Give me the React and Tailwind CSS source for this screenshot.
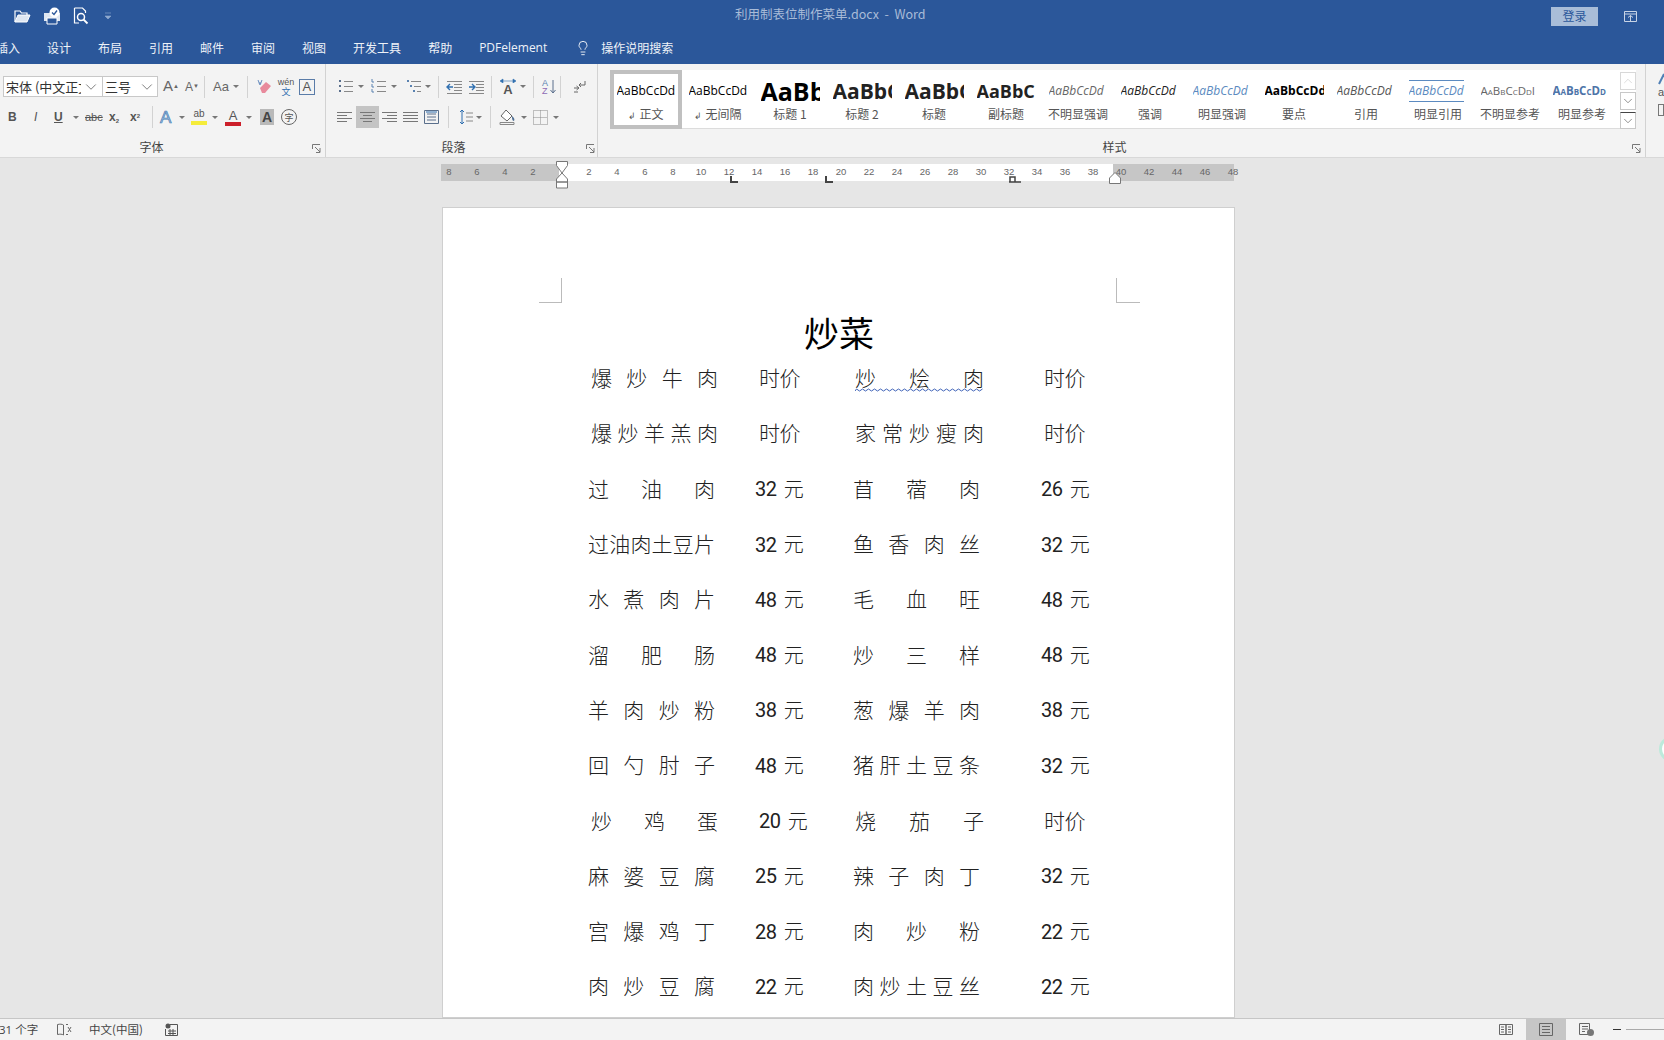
import { ChevronDown, ChevronUp, Lightbulb } from 'lucide-react';

const menu = [
  { a: '爆炒牛肉', p: '时价', b: '炒烩肉', q: '时价', off: true, wavy: true },
  { a: '爆炒羊羔肉', p: '时价', b: '家常炒瘦肉', q: '时价', off: true },
  { a: '过油肉', p: '32 元', b: '苜蓿肉', q: '26 元' },
  { a: '过油肉土豆片', p: '32 元', b: '鱼香肉丝', q: '32 元' },
  { a: '水煮肉片', p: '48 元', b: '毛血旺', q: '48 元' },
  { a: '溜肥肠', p: '48 元', b: '炒三样', q: '48 元' },
  { a: '羊肉炒粉', p: '38 元', b: '葱爆羊肉', q: '38 元' },
  { a: '回勺肘子', p: '48 元', b: '猪肝土豆条', q: '32 元' },
  { a: '炒鸡蛋', p: '20 元', b: '烧茄子', q: '时价', off: true },
  { a: '麻婆豆腐', p: '25 元', b: '辣子肉丁', q: '32 元' },
  { a: '宫爆鸡丁', p: '28 元', b: '肉炒粉', q: '22 元' },
  { a: '肉炒豆腐', p: '22 元', b: '肉炒土豆丝', q: '22 元' },
];

const styles = [
  { label: '正文', mark: true, cls: 'text-[12px] text-black' },
  { label: '无间隔', mark: true, cls: 'text-[12px] text-black' },
  { label: '标题 1', text: 'AaBb', cls: "text-[25px] font-bold text-black" },
  { label: '标题 2', text: 'AaBbC', cls: "text-[21px] font-bold text-[#222] font-['Liberation_Serif',serif]" },
  { label: '标题', text: 'AaBbC', cls: "text-[21px] font-bold text-[#222] font-['Liberation_Serif',serif]" },
  { label: '副标题', text: 'AaBbC', cls: 'text-[18px] font-bold text-[#222]' },
  { label: '不明显强调', cls: 'text-[12px] italic text-[#666]' },
  { label: '强调', cls: 'text-[12px] italic text-[#222]' },
  { label: '明显强调', cls: 'text-[12px] italic text-[#5b8ac0]' },
  { label: '要点', cls: 'text-[12px] font-bold text-black' },
  { label: '引用', cls: 'text-[12px] italic text-[#555]' },
  { label: '明显引用', ruled: true, cls: 'text-[12px] italic text-[#5b8ac0]' },
  { label: '不明显参考', text: 'AaBbCcDdI', cls: 'text-[11.5px] text-[#666] [font-variant:small-caps]' },
  { label: '明显参考', text: 'AaBbCcDd', cls: 'text-[11.5px] font-bold text-[#4e74a8] [font-variant:small-caps]' },
];

function Ico({ w = 16, h = 16, className = '', children }) {
  return (
    <svg width={w} height={h} viewBox={`0 0 ${w} ${h}`} fill="none" className={`shrink-0 ${className}`}>
      {children}
    </svg>
  );
}

function Caret({ className = '' }) {
  return (
    <Ico w={6} h={3} className={className}>
      <path d="M0 0h6L3 3z" fill="#777" />
    </Ico>
  );
}

function Sep({ className = '' }) {
  return <div className={`w-px h-[22px] bg-[#d2d2d2] shrink-0 ${className}`} />;
}

function Lines({ rows, className = '' }) {
  return (
    <Ico w={15} h={14} className={className}>
      {rows.map(([x1, x2], i) => (
        <path key={i} d={`M${x1} ${2.5 + i * 3}H${x2}`} stroke="#777" />
      ))}
    </Ico>
  );
}

function Launcher({ className = '' }) {
  return (
    <Ico w={9} h={9} className={`absolute bottom-[4px] ${className}`}>
      <path d="M.5 5V.5H8M3 3l5 5M8 4v4.500H4" stroke="#777" />
    </Ico>
  );
}

function ListIcon({ kind, className = '' }) {
  return (
    <Ico w={15} h={15} className={className}>
      {[2, 7, 12].map((y, i) => (
        <g key={y}>
          {kind === 'bullet' && <rect x="1" y={y - 1} width="2" height="2" fill="#5a6f8c" />}
          {kind === 'num' && <path d={`M1 ${y - 2}v3h2`} stroke="#5a82b0" />}
          {kind === 'multi' && <rect x={1 + i * 3} y={y - 1} width="2" height="2" fill="#5a82b0" />}
          <path d={`M${kind === 'multi' ? 5 + i * 3 : 6} ${y + 0.5}H15`} stroke="#888" />
        </g>
      ))}
    </Ico>
  );
}

function Indent({ flip, className = '' }) {
  return (
    <Ico w={16} h={14} className={className}>
      {[1, 4, 7, 10, 13].map((y) => (
        <path key={y} d={`M${y === 1 || y === 13 ? 1 : 8} ${y + 0.500}H16`} stroke="#888" />
      ))}
      <path d={flip ? 'M1 7h5M4 4l3 3-3 3' : 'M7 7H2M4 4L1 7l3 3'} stroke="#2f6fb0" strokeWidth="1.4" />
    </Ico>
  );
}

function Ruler() {
  const nums = [8, 6, 4, 2, '', 2, 4, 6, 8, 10, 12, 14, 16, 18, 20, 22, 24, 26, 28, 30, 32, 34, 36, 38, 40, 42, 44, 46, 48];
  return (
    <div className="relative flex h-[17px] w-[793px] ml-[441px] mt-[6px] shrink-0">
      <div className="w-[118px] bg-[#c6c6c6]" />
      <div className="w-[554px] bg-white" />
      <div className="w-[121px] bg-[#c6c6c6]" />
      <div className="absolute inset-0 -left-[6px] flex items-center">
        {nums.map((n, i) => (
          <span key={i} className="w-[28px] shrink-0 text-center text-[9.5px] text-[#666] font-['Liberation_Sans',sans-serif]">{n}</span>
        ))}
      </div>
      <Ico w={14} h={28} className="absolute left-[114px] -top-[3px]">
        <path d="M1.500.500h11v4L7 12l-5.500-7.500z M7 12l5.500 6v3h-11v-3z M1.500 21h11v6h-11z" fill="#fff" stroke="#777" />
      </Ico>
      <Ico w={14} h={12} className="absolute left-[667px] top-[8px]">
        <path d="M7 .500L12.500 6v5.500h-11V6z" fill="#fff" stroke="#777" />
      </Ico>
      <Ico w={8} h={8} className="absolute left-[289px] top-[12px]">
        <path d="M1 0v6h7" stroke="#444" strokeWidth="2" />
      </Ico>
      <Ico w={8} h={8} className="absolute left-[384px] top-[12px]">
        <path d="M1 0v6h7" stroke="#444" strokeWidth="2" />
      </Ico>
      <Ico w={12} h={8} className="absolute left-[568px] top-[12px]">
        <path d="M1 6V1h5v5M0 6h12" stroke="#444" strokeWidth="1.500" />
      </Ico>
    </div>
  );
}

function Spread({ text, className = '' }) {
  return (
    <div className={`flex justify-between ${className}`}>
      {text.split('').map((c, i) => <span key={i}>{c}</span>)}
    </div>
  );
}

function Price({ text }) {
  const [num, unit] = text.split(' ');
  if (!unit) return <span className="tracking-[-0.5px]">{text}</span>;
  return (
    <span className="flex items-center">
      <span className="font-['Roboto',sans-serif] font-normal text-[#222] text-[20px] tracking-[-0.4px] mr-[7px] mt-[2px]">{num}</span>
      <span className="text-[20px] mt-[1px]">{unit}</span>
    </span>
  );
}

function MenuRow({ row }) {
  const grid = row.off
    ? 'grid-cols-[168px_96px_189px_auto] pl-[148px]'
    : 'grid-cols-[167px_98px_188px_auto] pl-[145px]';
  return (
    <div className={`grid ${grid} h-[55.3px] items-center text-[21px] leading-none font-light text-[#222]`}>
      <Spread text={row.a} className="w-[127px]" />
      <Price text={row.p} />
      <div className={`relative ${row.off ? 'w-[129px]' : 'w-[127px]'}`}>
        <Spread text={row.b} />
        {row.wavy && (
          <Ico w={129} h={4} className="absolute left-0 -bottom-[4px]">
            <path
              d={`M0 3${Array.from({ length: 43 }, (_, i) => `L${i * 3 + 1.5} ${i % 2 ? 3 : 1}`).join('')}`}
              stroke="#3f63b8"
            />
          </Ico>
        )}
      </div>
      <Price text={row.q} />
    </div>
  );
}

function TitleBar() {
  return (
    <div className="relative flex items-center h-[32px] shrink-0 text-[#a9bcd8]">
      <Ico w={18} h={16} className="ml-[14px]">
        <path d="M1 14V3h5l1.500 2H13v2" stroke="#fff" strokeWidth="1.200" />
        <path d="M1 14l3-7h12l-3 7z" fill="#dfe7f2" stroke="#fff" />
      </Ico>
      <Ico w={18} h={18} className="ml-[11px]">
        <path d="M1 6h16v8H1z" fill="#dfe7f2" />
        <path d="M4 11h10v6H4z" fill="#2b579a" stroke="#fff" />
        <circle cx="11.500" cy="5.500" r="5" fill="#fff" />
        <path d="M9 5.500l2 2 3-4" stroke="#2b579a" strokeWidth="1.300" />
      </Ico>
      <Ico w={16} h={18} className="ml-[12px]">
        <path d="M1.500 1h8l3 3v2M1.500 1v15H6" stroke="#fff" strokeWidth="1.200" />
        <circle cx="8" cy="10" r="3.500" stroke="#fff" strokeWidth="1.500" />
        <path d="M10.500 12.500l4 4" stroke="#fff" strokeWidth="1.800" />
      </Ico>
      <Ico w={8} h={8} className="ml-[15px]">
        <path d="M1 1h6M1 4h6L4 7z" stroke="#8fa9cf" fill="#8fa9cf" strokeWidth=".6" />
      </Ico>
      <div className="absolute left-[735px] top-[5px] text-[12.5px] leading-[18px] whitespace-pre">利用制表位制作菜单.docx  -  Word</div>
      <div className="ml-auto flex items-center">
        <div className="flex items-center justify-center w-[47px] h-[19px] bg-[#a9bdd8] text-[#2b579a] text-[12px]">登录</div>
        <Ico w={13} h={11} className="ml-[26px] mr-[27px]">
          <path d="M.500.500h12v10H.500zM.500 3h12M4 6.500l2.500-2 2.500 2M6.500 4.500V10" stroke="#c8d4e6" />
        </Ico>
      </div>
    </div>
  );
}

function TabRow() {
  const tabs = ['插入', '设计', '布局', '引用', '邮件', '审阅', '视图', '开发工具', '帮助'];
  return (
    <div className="flex items-center h-[32px] shrink-0 text-[12px] text-[#eef2f8] pl-0">
      <div className="flex gap-[27px] -ml-[4px]">
        {tabs.map((t) => <span key={t}>{t}</span>)}
        <span className="font-['Open_Sans',sans-serif] text-[12px]">PDFelement</span>
      </div>
      <Lightbulb size={16} strokeWidth={1.3} className="ml-[28px] text-white" />
      <span className="ml-[10px]">操作说明搜索</span>
    </div>
  );
}

function FontGroup() {
  return (
    <div className="relative w-[326px] border-r border-[#d2d2d2] shrink-0 pt-[12px]">
      <div className="flex items-center h-[21px] pl-[3px]">
        <div className="flex items-center w-[100px] h-[21px] bg-white border border-[#c8c8c8] pl-[2px] text-[13px] text-[#333]">
          <span className="w-[75px] overflow-hidden whitespace-nowrap">宋体 (中文正文)</span>
          <ChevronDown size={18} strokeWidth={1} className="text-[#555] ml-[1px]" />
        </div>
        <div className="flex items-center w-[55px] h-[21px] bg-white border border-l-0 border-[#c8c8c8] pl-[2px] text-[13px] text-[#333]">
          <span className="w-[33px]">三号</span>
          <ChevronDown size={18} strokeWidth={1} className="text-[#555]" />
        </div>
        <span className="ml-[5px] text-[15px] text-[#666] font-['Liberation_Sans',sans-serif] w-[14px]">A<sup className="text-[6px]">▲</sup></span>
        <span className="ml-[8px] text-[12px] text-[#666] font-['Liberation_Sans',sans-serif] w-[12px]">A<sup className="text-[6px]">▼</sup></span>
        <Sep className="ml-[7px]" />
        <span className="ml-[8px] text-[13px] text-[#666] font-['Liberation_Sans',sans-serif]">Aa</span>
        <Caret className="ml-[4px]" />
        <Sep className="ml-[8px]" />
        <Ico w={16} h={16} className="ml-[9px]">
          <path d="M3 9l6-6 5 4-6 7H5z" fill="#e88a9c" />
          <path d="M1 1l2 5 2-5M1.700 4h2.600" stroke="#6b8fc0" />
        </Ico>
        <div className="ml-[5px] w-[16px] flex flex-col items-center leading-none">
          <span className="text-[9px] text-[#555] font-['Liberation_Sans',sans-serif]">wén</span>
          <span className="text-[9px] text-[#2f6fb0]">文</span>
        </div>
        <div className="ml-[5px] flex items-center justify-center w-[16px] h-[16px] border border-[#5a7ca8] text-[13px] leading-none text-[#555] font-['Liberation_Sans',sans-serif]">A</div>
      </div>
      <div className="flex items-center h-[22px] mt-[9px] text-[#555] font-['Liberation_Sans',sans-serif]">
        <span className="ml-[8px] w-[10px] text-[12px] font-bold">B</span>
        <span className="ml-[16px] w-[8px] text-[12px] italic">I</span>
        <span className="ml-[12px] w-[10px] text-[12px] font-bold underline">U</span>
        <Caret className="ml-[9px]" />
        <span className="ml-[6px] w-[18px] text-[11px] line-through">abc</span>
        <span className="ml-[6px] w-[12px] text-[12px] font-bold">x<sub className="text-[6px]">2</sub></span>
        <span className="ml-[9px] w-[13px] text-[12px] font-bold">x<sup className="text-[6px]">2</sup></span>
        <Sep className="ml-[9px]" />
        <span className="ml-[7px] w-[16px] text-[17px] leading-none text-[#a9cbe8] [-webkit-text-stroke:0.7px_#4f81b5]">A</span>
        <Caret className="ml-[3px]" />
        <div className="ml-[6px] w-[16px] flex flex-col items-center leading-none">
          <span className="text-[10px] h-[12px]">ab</span>
          <div className="w-[16px] h-[4px] bg-[#f5ec3a]" />
        </div>
        <Caret className="ml-[5px]" />
        <div className="ml-[7px] w-[16px] flex flex-col items-center leading-none">
          <span className="text-[13px] h-[13px]">A</span>
          <div className="w-[16px] h-[4px] bg-[#cc1f2a]" />
        </div>
        <Caret className="ml-[5px]" />
        <div className="ml-[8px] flex items-center justify-center w-[14px] h-[16px] bg-[#b9b9b9] text-[14px] font-bold leading-none text-[#444]">A</div>
        <div className="ml-[7px] flex items-center justify-center w-[16px] h-[16px] rounded-full border border-[#666] text-[9px] leading-none font-['Noto_Sans_CJK_SC',sans-serif]">字</div>
      </div>
      <div className="h-[20px] mt-[9px] text-center text-[12px] leading-[20px] text-[#444] pr-[22px]">字体</div>
      <Launcher className="right-[4px]" />
    </div>
  );
}

function ParaGroup() {
  const L = [[0, 15], [0, 10], [0, 15], [0, 10]];
  const C = [[0, 15], [3, 12], [0, 15], [3, 12]];
  const R = [[0, 15], [5, 15], [0, 15], [5, 15]];
  const J = [[0, 15], [0, 15], [0, 15], [0, 15]];
  return (
    <div className="relative w-[272px] border-r border-[#d2d2d2] shrink-0 pt-[12px]">
      <div className="flex items-center h-[21px]">
        <ListIcon kind="bullet" className="ml-[12px]" />
        <Caret className="ml-[5px]" />
        <ListIcon kind="num" className="ml-[7px]" />
        <Caret className="ml-[5px]" />
        <ListIcon kind="multi" className="ml-[9px]" />
        <Caret className="ml-[4px]" />
        <Sep className="ml-[7px]" />
        <Indent className="ml-[7px]" />
        <Indent flip className="ml-[6px]" />
        <Sep className="ml-[7px]" />
        <div className="ml-[7px] w-[18px] flex flex-col items-center leading-none">
          <Ico w={18} h={5}>
            <path d="M1 3l3-2v4zM17 3l-3-2v4z M4 3h10" fill="#2f6fb0" stroke="#2f6fb0" strokeWidth=".6" />
          </Ico>
          <span className="text-[13px] h-[13px] text-[#555] font-bold font-['Liberation_Sans',sans-serif]">A</span>
        </div>
        <Caret className="ml-[3px]" />
        <Sep className="ml-[7px]" />
        <div className="ml-[8px] w-[8px] flex flex-col leading-[8px] text-[9px] font-['Liberation_Sans',sans-serif]">
          <span className="text-[#5a82b0]">A</span>
          <span className="text-[#8e6bb5]">Z</span>
        </div>
        <Ico w={6} h={16}>
          <path d="M3 1v13M.500 11L3 14l2.500-3" stroke="#5a6f8c" />
        </Ico>
        <Sep className="ml-[4px]" />
        <Ico w={12} h={14} className="ml-[13px]">
          <path d="M11 1v4H5M7 3L5 5l2 2M0 8h4M2.500 6L5 8l-2.500 2M0 12h4" stroke="#666" />
        </Ico>
      </div>
      <div className="flex items-center h-[22px] mt-[9px]">
        <Lines rows={L} className="ml-[11px]" />
        <div className="ml-[4px] flex items-center justify-center w-[23px] h-[22px] bg-[#c4c4c4]">
          <Lines rows={C} />
        </div>
        <Lines rows={R} className="ml-[3px]" />
        <Lines rows={J} className="ml-[6px]" />
        <Ico w={15} h={16} className="ml-[6px]">
          <path d="M.500 1.500h14v13H.500zM3 5h9M3 8h9M3 11h9" stroke="#5a6f8c" />
          <path d="M2 3h11" stroke="#2f6fb0" />
        </Ico>
        <Sep className="ml-[9px]" />
        <Ico w={14} h={16} className="ml-[10px]">
          <path d="M3 1v14M1 3l2-2 2 2M1 13l2 2 2-2" stroke="#2f6fb0" />
          <path d="M7 4h7M7 8h7M7 12h7" stroke="#888" />
        </Ico>
        <Caret className="ml-[3px]" />
        <Sep className="ml-[8px]" />
        <Ico w={17} h={16} className="ml-[8px]">
          <path d="M7 1l6 6-5 5-6-5z" stroke="#666" fill="#fff" />
          <path d="M13 7c2 2 3 3 2 5-2 0-2-3-2-5z" fill="#4f6f94" />
          <path d="M1 13.500h14v2H1z" stroke="#888" />
        </Ico>
        <Caret className="ml-[5px]" />
        <Ico w={15} h={15} className="ml-[6px]">
          <path d="M.500.500h14v14H.500zM7.500.500v14M.500 7.500h14" stroke="#888" strokeDasharray="1 1" />
        </Ico>
        <Caret className="ml-[5px]" />
      </div>
      <div className="h-[20px] mt-[9px] text-center text-[12px] leading-[20px] text-[#444] pr-[16px]">段落</div>
      <Launcher className="right-[2px]" />
    </div>
  );
}

function StyleItem({ item, first }) {
  const sample = item.text || 'AaBbCcDd';
  return (
    <div className={`flex flex-col items-center w-[72px] h-[59px] shrink-0 ${first ? 'border-[4px] border-[#c0c0c0] pt-[3px]' : 'pt-[7px]'}`}>
      <div className="flex items-center justify-start w-[59px] h-[28px] overflow-hidden">
        <span className={`whitespace-nowrap font-['Open_Sans',sans-serif] leading-none ${item.ruled ? 'border-y border-[#5b8ac0] py-[4px]' : ''} ${item.cls}`}>{sample}</span>
      </div>
      <div className="text-[12px] leading-[16px] text-[#555] mt-[1px] whitespace-nowrap">
        {item.mark && <span className="text-[9px] mr-[3px]">↲</span>}
        {item.label}
      </div>
    </div>
  );
}

function StyleGroup() {
  return (
    <div className="relative w-[1048px] border-r border-[#d2d2d2] shrink-0 pt-[6px]">
      <div className="flex ml-[12px] w-[1026px] h-[59px] bg-white border-b border-[#dcdcdc]">
        {styles.map((s, i) => <StyleItem key={s.label} item={s} first={i === 0} />)}
        <div className="ml-[2px] w-[16px] flex flex-col gap-[2px] pt-[2px]">
          <div className="flex items-center justify-center h-[18px] border border-[#d8d8d8] text-[#c4c4c4]"><ChevronUp size={16} strokeWidth={1} /></div>
          <div className="flex items-center justify-center h-[18px] border border-[#c8c8c8] text-[#444]"><ChevronDown size={16} strokeWidth={1} /></div>
          <div className="flex items-center justify-center h-[17px] border border-[#c8c8c8] border-t-[#444] text-[#444]"><ChevronDown size={16} strokeWidth={1} /></div>
        </div>
      </div>
      <div className="h-[20px] mt-[8px] text-center text-[12px] leading-[20px] text-[#444] pr-[14px]">样式</div>
      <Launcher className="right-[4px]" />
    </div>
  );
}

function Ribbon() {
  return (
    <div className="flex h-[94px] bg-[#f3f3f3] border-b border-[#d8d8d8] shrink-0 overflow-hidden">
      <FontGroup />
      <ParaGroup />
      <StyleGroup />
      <div className="pl-[12px] pt-[9px] text-[#555] leading-none">
        <Ico w={6} h={12}>
          <path d="M6 1L1 11" stroke="#4f7fb5" strokeWidth="2" />
        </Ico>
        <div className="text-[11px] mt-[2px] font-['Liberation_Sans',sans-serif]">a</div>
        <div className="w-[6px] h-[12px] border border-[#777] mt-[6px]" />
      </div>
    </div>
  );
}

function StatusBar() {
  return (
    <div className="flex items-center h-[22px] bg-[#f3f3f3] border-t border-[#c6c6c6] shrink-0 text-[11.5px] text-[#444] overflow-hidden">
      <span className="-ml-[1px] w-[58px] font-['Open_Sans','Noto_Sans_CJK_SC',sans-serif] whitespace-nowrap">31 个字</span>
      <Ico w={15} h={13}>
        <path d="M6.500 2C5 1 3 1 .500 1.500v10C3 11 5 11 6.500 12zM9 1.500h2M9 11.500h2M11 4l3 5M14 4l-3 5" stroke="#666" />
      </Ico>
      <span className="ml-[17px] w-[56px]">中文(中国)</span>
      <Ico w={13} h={13} className="ml-[20px]">
        <circle cx="3" cy="3" r="2.500" fill="#555" />
        <path d="M5 1.500h7.500v11H.500V6M3 8h8M3 10.500h8M5 6v6M8 6v6" stroke="#555" />
      </Ico>
      <div className="ml-auto flex items-center h-full">
        <Ico w={14} h={13}>
          <path d="M.500 1.500h6.500v10H.500zM7 1.500h6.500v10H7zM2 4h3M2 6.500h3M2 9h3M9 4h3M9 6.500h3M9 9h3" stroke="#666" />
        </Ico>
        <div className="ml-[13px] flex items-center justify-center w-[40px] h-full bg-[#c6c6c6]">
          <Ico w={14} h={13}>
            <path d="M.500.500h13v12H.500zM3 3.500h8M3 6.500h8M3 9.500h8" stroke="#666" />
          </Ico>
        </div>
        <Ico w={15} h={13} className="ml-[13px]">
          <path d="M.500.500h10v11H.500zM3 3.500h6M3 6h6M3 8.500h3" stroke="#666" />
          <circle cx="11.500" cy="9.500" r="3.500" fill="#777" />
        </Ico>
        <div className="ml-[19px] w-[8px] h-[1px] bg-[#333]" />
        <div className="ml-[5px] w-[38px] h-[1px] bg-[#aaa]" />
      </div>
    </div>
  );
}

export default function App() {
  return (
    <div className="relative flex flex-col w-[1664px] h-[1040px] overflow-hidden bg-[#e6e6e6] font-['Noto_Sans_CJK_SC',sans-serif]">
      <div className="bg-[#2b579a] shrink-0">
        <TitleBar />
        <TabRow />
      </div>
      <Ribbon />
      <div className="flex flex-col flex-1 min-h-0 overflow-hidden">
        <Ruler />
        <div className="ml-[442px] mt-[26px] w-[793px] flex-1 bg-white border border-[#cfcfcf] shrink-0">
          <div className="flex justify-between pl-[96px] pr-[94px] pt-[70px]">
            <div className="w-[23px] h-[25px] border-r border-b border-[#bbb]" />
            <div className="w-[24px] h-[25px] border-l border-b border-[#bbb]" />
          </div>
          <div className="h-[47px] pl-[1px] text-center text-[35px] leading-[58px] font-normal text-black">炒菜</div>
          {menu.map((r) => <MenuRow key={r.a} row={r} />)}
        </div>
      </div>
      <StatusBar />
      <div className="absolute left-[1659px] top-[736px] w-[26px] h-[26px] rounded-full bg-white border-[3px] border-[#bdeadb]" />
    </div>
  );
}
